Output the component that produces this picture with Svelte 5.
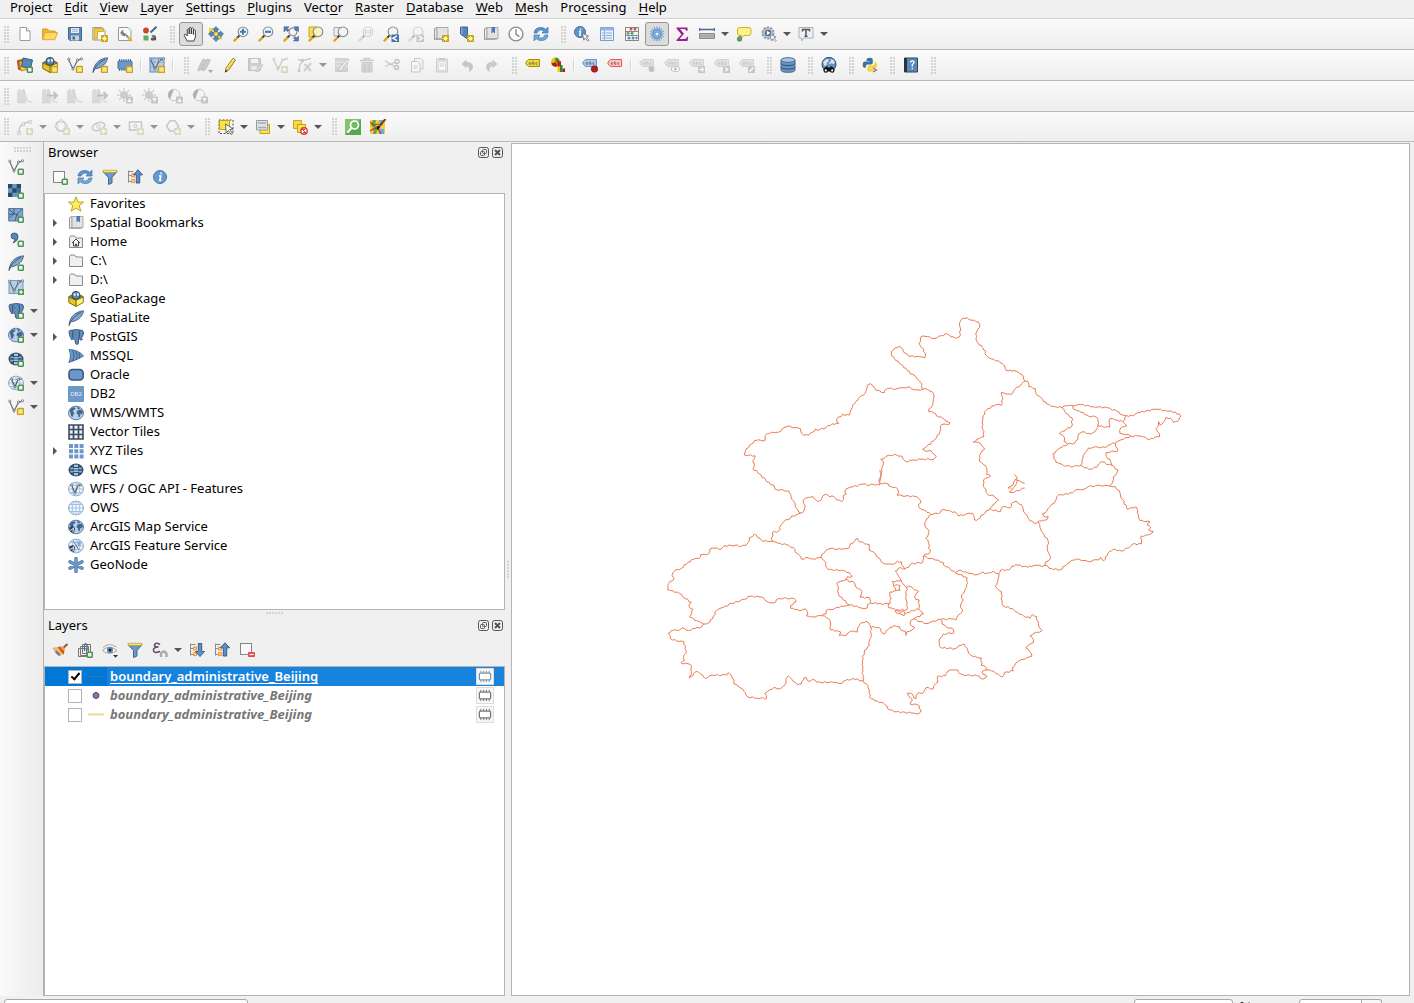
<script lang="ts">
	type Tool = { icon: string; label: string; menu?: boolean; off?: boolean; pressed?: boolean };
	type Item = Tool | 'sep';

	const t = (icon: string, label: string, flags = ''): Tool => ({
		icon,
		label,
		menu: flags.includes('m'),
		off: flags.includes('d'),
		pressed: flags.includes('p')
	});

	const menus = [
		['Pro', 'j', 'ect'], ['', 'E', 'dit'], ['', 'V', 'iew'], ['', 'L', 'ayer'], ['', 'S', 'ettings'],
		['', 'P', 'lugins'], ['Vect', 'o', 'r'], ['', 'R', 'aster'], ['', 'D', 'atabase'], ['', 'W', 'eb'],
		['', 'M', 'esh'], ['Pro', 'c', 'essing'], ['', 'H', 'elp']
	];

	// badges sit in the lower right corner of a 16x16 icon
	const yellow = '<rect x="9.5" y="9.5" width="6" height="6" rx="1" fill="#f7e58a" stroke="#c9a11a" stroke-width="1.4"/>';
	const star = '<rect x="9" y="9" width="7" height="7" rx="1" fill="#c9a10f"/><path d="M12.5 9.8v5.4M9.8 12.5h5.4M10.7 10.7l3.6 3.6M14.3 10.7l-3.6 3.6" stroke="#fff3b0" stroke-width="1"/>';
	const green = '<rect x="10.3" y="10.3" width="5" height="5" rx="1" fill="#eef7ee" stroke="#4f9457" stroke-width="1.6"/>';
	const lens = '<path d="M.8 15.2l4.4-4.4" stroke="#e0a61c" stroke-width="2.4"/><path d="M4.6 11.4l2-2" stroke="#333" stroke-width="1.8"/><circle cx="10" cy="5.8" r="4.8" fill="#f3f5f6" stroke="#8b9093" stroke-width="1.2"/>';
	const vee = '<path d="M1.5 2.5L6 12 10.5 3.5 14 2" fill="none" stroke="#5c6670" stroke-width="1.1"/><g fill="#fff" stroke="#5c6670" stroke-width=".8"><circle cx="1.8" cy="2.2" r="1.1"/><circle cx="6" cy="12" r="1.1"/><circle cx="10.5" cy="3" r="1.1"/><circle cx="14.5" cy="1.8" r="1.1"/></g>';
	const feather = '<path d="M1 15.5C1.5 9 5 2 15.5.8 15 5.5 11 10.500 3.600 11.800" fill="#7ea6d0" stroke="#4a6585"/><path d="M1 15.5C3 10 7 5 13 2.500" fill="none" stroke="#3d5775"/>';
	const globe = '<ellipse cx="8" cy="8" rx="7.500" ry="6.800" fill="#b9d1ea" stroke="#587fa8"/><path d="M1.500 5.500L4 2.500h3l.5 1.500-2 1-.5 2 1.500 1-1 1.500-1 2.500-1.500-1-.5-3zM9 2l2.500.5.5 1.500-2 .5zM9 6l2-1 3-.5 1 3-1.500 2-1-1-.5 3-1.500 1-.5-3-1.500-1z" fill="#45678d"/>';
	const grid = '<path d="M.8 8h14.400M8 1v14M2 4.500h12M2 11.500h12" fill="none" stroke="currentColor"/><ellipse cx="8" cy="8" rx="3.800" ry="6.800" fill="none" stroke="currentColor"/>';
	const wire = `<ellipse cx="8" cy="8" rx="7.400" ry="6.800" fill="#f3f8fd" stroke="#7ba1ca"/><g color="#a5c1e0">${grid}</g>`;
	const smallVee = '<path d="M3.500 4L7 12 10 4.500 12.500 4" fill="none" stroke="#4f5964" stroke-width="1.200"/><g fill="#fff" stroke="#4f5964" stroke-width=".7"><circle cx="3.500" cy="4" r="1"/><circle cx="7" cy="12" r="1"/><circle cx="10" cy="4.500" r="1"/><circle cx="12.800" cy="3.800" r="1"/></g>';
	const darkGlobe = '<ellipse cx="8" cy="8" rx="7.500" ry="6.500" fill="#34506f"/><path d="M2 7.200h3V5.500H2.700zM11 5.500v1.700h3l-.7-1.700zM2 8.800h3v1.700H2.700zM11 8.800h3l-.7 1.700H11z" fill="#8eb1d8"/><path d="M6 2.800h4V5H6zM5.500 6h5v4h-5zM6 11h4v2.200H6z" fill="#a9c6e6"/><path d="M4 8h8" stroke="#34506f"/>';
	const elephant = '<path d="M1 3Q1 .8 4 1.200Q8 0 12 1Q15.500 .8 15.500 4Q15 8 13 9.500L14.500 10.500 12 11 11.500 8.500 10.500 9V14Q10 15.600 8.500 15.500 7 15 7.200 11L5 9.500 4 11Q1.500 8 1 3z" fill="#5f8cbc" stroke="#3d5c80"/><path d="M5 2Q4 6 5 9M11 2Q12 5 11 8.500M6.500 5h1" fill="none" stroke="#34506f"/>';
	const box = '<path d="M.8 5.500L8 2.500 15.200 5.500v6L8 15.500.8 11.500z" fill="#e6c42a" stroke="#7d6500"/><path d="M8.500 9.500l6.200-3.200v5L8.500 14.700z" fill="#fdf27c"/><path d="M1 5.500L8 2.500l7 3L8 9z" fill="#5a80aa"/><circle cx="8" cy="4.400" r="4" fill="#5a80aa" stroke="#2d4664"/><path d="M5 3.500l2-1.800 1 1.800-1 2zM9 1.500l2.200 1-.7 3-1.500-1z" fill="#d5e5f5"/><path d="M.8 6L8 9.200 15.200 6M8 9.200v6" fill="none" stroke="#7d6500"/>';
	const tag = (fill: string, line: string) => `<path d="M1 5L3.500 2.500H14.500V9.500H3.500L1 7z" fill="${fill}" stroke="${line}"/><path d="M4.200 7.300v-1.600h1.600v1.600zM7.600 4.300v3h1.400v-1.600h-1.400M12.400 5.700h-1.500v1.600h1.500" fill="none" stroke="#666" stroke-width=".7"/>`;
	const chip = '<path d="M2.500 4V2M4.700 4V2M6.900 4V2M9.100 4V2M11.300 4V2M13.500 4V2M2.500 14v-2M4.700 14v-2M6.900 14v-2M9.100 14v-2" stroke="#4a7099"/><rect x="1" y="4" width="14" height="8" rx="1" fill="#6b98c8" stroke="#4a7099"/>';
	const book = '<path d="M1.500 2.500L4 1.500v11l-2.500 1z" fill="#eee" stroke="#999"/><path d="M4 1.500h11v11H4z" fill="#e3e3e3" stroke="#aaa"/><path d="M1.500 13.500h11l2.500-1" fill="none" stroke="#aaa"/>';
	const refresh = '<path d="M1 7Q1.500 1.500 8 1.500 11 1.500 12.800 3.300L15 1.200V7H9L11 5Q6 2 4 7z" fill="#5c94cf" stroke="#3e74ac" stroke-width=".7"/><path d="M15 9Q14.500 14.500 8 14.500 5 14.500 3.200 12.700L1 14.800V9H7L5 11Q10 14 12 9z" fill="#77aadb" stroke="#3e74ac" stroke-width=".7"/>';
	const funnel = '<path d="M1 2.500h14L10 8.500V14l-3.500 1.500V8.500z" fill="#6b98c8" stroke="#44688f"/><path d="M1.300 1.300h13.400v2.200H1.300z" fill="#ffec4f" stroke="#a69838" stroke-width=".7"/>';
	const tree = '<path d="M1.500 1.500v12M1.500 2.500h5M1.500 6.500h4M1.500 12.500h4" stroke="#8a8a8a" fill="none"/><g fill="#fff" stroke="#f19a3e" stroke-width="1.300"><rect x="4.700" y="5.200" width="2.600" height="2.600"/><rect x="4.700" y="10.800" width="2.600" height="2.600"/></g>';
	const info = '<circle cx="8" cy="8" r="6.500" fill="#659ad0" stroke="#4477ad"/><path d="M9 3.500v1.800M7 7h1.800L7.800 11.500h1.700" fill="none" stroke="#fff" stroke-width="1.600"/>';
	const curve = '<path d="M2 14Q2 3 13 3" fill="none" stroke="#777" stroke-width="1.300"/><path d="M.7 12.700h2.600v2.600H.7zM5 4h2.600v2.600H5zM12 1.700h2.600v2.600H12z" fill="#fff" stroke="#777"/>';
	const hist = '<path d="M.5 15V3l1.500-2 2 1 .5 13zM5 15V2l1.500-1 1.500 8 .5 6z" fill="#a3b594" stroke="#8b9487" stroke-width=".6"/><path d="M7 1.500l1.500 6L10.500 13l5 1.500" fill="none" stroke="#888"/>';
	const sun = '<circle cx="7" cy="7" r="4" fill="#8d8552"/><path d="M7 0v2.500M7 11.500V14M0 7h2.500M11.500 7H14M2 2l1.700 1.700M12 2l-1.700 1.700M2 12l1.700-1.700" stroke="#8f875b" stroke-width="1.400"/>';
	const half = '<circle cx="7" cy="7" r="5.800" fill="#f6f6f6" stroke="#777"/><path d="M7 1.200A5.800 5.800 0 0 0 3 11.200z" fill="#333"/>';
	const up = '<rect x="9" y="8.500" width="7" height="7" rx="1" fill="#767660"/><path d="M12.500 10l2.200 4h-4.400z" fill="#fff"/>';
	const down = '<rect x="9" y="8.500" width="7" height="7" rx="1" fill="#767660"/><path d="M12.500 14l2.200-4h-4.400z" fill="#fff"/>';
	const pencil = '<path d="M4 11L11 1.200l2.500 1.800L6.500 13.200 3.300 15z" fill="#f0d13a" stroke="#a0812a"/><path d="M5 11.500L12 2" stroke="#fff09a"/><path d="M2.800 15.500l.8-2.800 2 1.400z" fill="#333"/>';
	const folder = '<path d="M1.500 13.500v-10L2.500 2h4l1.500 2h6.500v9.500z" fill="#f0f0f0" stroke="#8a8a8a"/>';

	const icons: Record<string, string> = {
		page: '<path d="M3 1.500h6.500L13 5v9.500H3z" fill="#fff" stroke="#9c9c9c"/><path d="M9.500 1.500V5H13" fill="#eee" stroke="#9c9c9c"/>',
		open: '<path d="M.6 13.500V3h5l1.500 2h6v2" fill="#e9b72c" stroke="#d2a02a"/><path d="M3 6.500h12.500l-2.700 7.200H.7z" fill="#ffd965" stroke="#dfab2d"/>',
		save: '<path d="M1.500 1.500h13v13h-11.500l-1.500-1.500z" fill="#5b87b6" stroke="#42678f"/><path d="M4 2h8v5H4z" fill="#e8eef5"/><path d="M5 3.500h6M5 5.300h6" stroke="#a7b8c9"/><path d="M4 9.500h8v5H4z" fill="#d0d4d8"/><path d="M5.500 10.500h2.500v3H5.500z" fill="#42678f"/>',
		layout: '<path d="M.8 1.500h9L13 4.700V14H.8z" fill="#fff" stroke="#999"/><path d="M2 2.500h9.500v3H5.500V13H2z" fill="#f0cb3a" stroke="#c49a1d" stroke-width=".7"/>' + star,
		manager: '<path d="M1.500 1.500h9.500L14 4.500V14.500H1.500z" fill="#fafafa" stroke="#999"/><path d="M4.300 5.500l4 4M9.200 9.200l4.800 5.300" stroke="#777" stroke-width="2"/><path d="M6.500 4.500a2.500 2.500 0 1 0 2.500 3" fill="none" stroke="#777"/><path d="M10.500 10.500l4.300 4.500" stroke="#e3b92d" stroke-width="2.200"/>',
		style: '<circle cx="4" cy="4.500" r="2.900" fill="#c6492b"/><path d="M8.500 6.500L14.500.8" stroke="#44688f" stroke-width="2"/><rect x="1.500" y="9.500" width="5" height="5" fill="#66a85b"/><path d="M9.800 10.200q3.500-1.200 3.500 1v3M13 11.800q-3.500-.2-3.500 1.300 1 1.700 3.500 0" fill="none" stroke="#444" stroke-width="1.300"/>',
		hand: '<path d="M4.200 15L1.300 9.500Q1 8 2.500 8.200L4.300 10V3.500q.9-1.500 1.900 0V8 2q1-1.600 2.100 0v6-5.500q1-1.500 2.100 0V8.500 4.500q1.100-1.200 2 0V11l-1.500 4z" fill="#fff" stroke="#333" stroke-width=".9"/>',
		pan: '<path d="M1.500 2.500h5v4h-5zM6 6h4v4H6zM10 9.500h3.500V13H10z" fill="#f5de50" stroke="#cfb52c" stroke-width=".6"/><path d="M8 .5l3.200 3.200H9.500V6h-3V3.700H4.800zM8 15.500l-3.200-3.200h1.700V10h3v2.300h1.700zM.5 8l3.200-3.200v1.700H6v3H3.700v1.700zM15.500 8l-3.200 3.200V9.500H10v-3h2.300V4.800z" fill="#5b87b6" stroke="#42678f" stroke-width=".6"/><path d="M6.500 6.500h3v3h-3z" fill="#f5de50"/>',
		zin: lens + '<path d="M10 2.800v6M7 5.800h6" stroke="#4679b3" stroke-width="2"/>',
		zout: lens + '<path d="M7 5.800h6" stroke="#4679b3" stroke-width="2.200"/>',
		zfull: lens.replace('r="4.8"', 'r="4"') + '<path d="M1 .8h5L4.500 2.300 6 4 4.500 5.500 2.800 4 1 5.800zM15.500.8h-4.500l1.500 1.500-1 1.200L13 5l1-1 1.500 1.500zM15.500 15h-5l1.500-1.500-1.500-1.500L12 10.500l1.500 1.500 2-2z" fill="#5280b3" stroke="#42678f" stroke-width=".6"/>',
		zsel: '<path d="M1 1h8v10H1z" fill="#f5de50" stroke="#bda528"/>' + lens.replace('#f3f5f6', '#fbf5bd'),
		zlay: '<path d="M1 1.500h8V10H1z" fill="#eee" stroke="#aaa"/>' + lens,
		znat: lens + '<path d="M7.700 3.800v4M12.300 3.800v4M10 4.200v1M10 6.500v1" stroke="#555"/>',
		zlast: lens + '<rect x="8.500" y="8.500" width="7.500" height="7.500" fill="#3f74ae"/><path d="M14 9.800l-4 2.400 4 2.400" fill="none" stroke="#fff" stroke-width="1.500"/>',
		znext: lens + '<rect x="8.500" y="8.500" width="7.500" height="7.500" fill="#777"/><path d="M10.500 9.800l4 2.400-4 2.400" fill="none" stroke="#fff" stroke-width="1.500"/>',
		bmap: book + star,
		bnew: '<path d="M2.500 1h7v12L6 10.500 2.500 8z" fill="#5484ba" stroke="#3c628d"/><path d="M3 1.500h1.500v6.500H3z" fill="#86abd3"/>' + star,
		bshow: book + '<path d="M8.500 1h3.500v6.500L10.200 6 8.500 7.500z" fill="#4c7cb2"/>',
		clock: '<circle cx="8" cy="8" r="6.900" fill="#fcfcfc" stroke="#8a8a8a" stroke-width="1.400"/><path d="M8 3v5.200l3.300 2.600" fill="none" stroke="#777" stroke-width="1.200"/>',
		refresh,
		identify: '<circle cx="6" cy="6" r="5.500" fill="#5f92c8" stroke="#44729f"/><path d="M6.600 2.500v1.500M5 5.500h1.500L5.700 9H7" fill="none" stroke="#fff" stroke-width="1.300"/><path d="M8.500 7.500l6 2.700-2.500 1 3 3-1 1-3-3-1.200 2z" fill="#fff" stroke="#666" stroke-width=".8"/>',
		table: '<path d="M1.500 1.500h13v13h-13z" fill="#e8f1fb" stroke="#6f9dce"/><path d="M1.500 1.500h13v3h-13z" fill="#8db6e2"/><path d="M5.500 4.500v10M3 7h2M6.500 7H13M3 9.500h2M6.500 9.500H13M3 12h2M6.500 12H13" stroke="#8eb0d4"/>',
		abacus: '<path d="M1.500 1v14M14.500 1v14M1 14.500h14M1 1.500h14M1 5.500h14M1 9.500h14" stroke="#888"/><g fill="#d15050"><circle cx="7" cy="3" r="1.500"/><circle cx="11" cy="3" r="1.500"/></g><g fill="#63a268"><circle cx="4" cy="7.300" r="1.500"/><circle cx="8" cy="7.300" r="1.500"/></g><g fill="#6289b3"><circle cx="5" cy="12" r="1.500"/><circle cx="9" cy="12" r="1.500"/><circle cx="12.500" cy="12" r="1.200"/></g>',
		gear: '<path d="M8 .8v14.400M.8 8h14.400M2.900 2.900l10.200 10.200M13.100 2.900L2.900 13.100M5.200 1.300l5.600 13.400M1.300 10.800l13.400-5.600M10.800 1.300L5.200 14.700M1.300 5.200l13.400 5.600" stroke="#6b9bd2" stroke-width="1.200"/><circle cx="8" cy="8" r="5" fill="#6b9bd2"/><circle cx="8" cy="8" r="3" fill="none" stroke="#8fb4e0"/><circle cx="8" cy="8" r="1.500" fill="#e6edf5"/>',
		sigma: '<path d="M2.500 1.500h11V5h-1Q12 3 9.500 3H6l4 4.700L5.500 13H10q2.800 0 3.300-2.300h1L13.500 15H2.500v-1l5-5.500-5-6z" fill="#9c1b8f"/>',
		measure: '<path d="M.7 3.500h14.600M.7 2v3M15.300 2v3" stroke="#4a6b92" stroke-width="1.300"/><path d="M.5 7.500h15v5H.5z" fill="#b4b4b4" stroke="#8a8a8a"/><path d="M1 10h14" stroke="#9d9d9d"/>',
		tip: '<path d="M3.500 1.500H13Q15 1.500 15 4v3q0 2.500-2 2.500H8L5 12.500l.5-3h-2Q1.500 9.500 1.500 7V4q0-2.500 2-2.500z" fill="#fff08a" stroke="#c9b23a"/><path d="M4 9.500v4" stroke="#777"/><circle cx="3.500" cy="13" r="2.300" fill="#6a9b60" stroke="#4c7043" stroke-width=".6"/>',
		action: '<circle cx="7" cy="7" r="5.500" fill="#fff" stroke="#999" stroke-width="2" stroke-dasharray="2.500 .9"/><circle cx="7" cy="7" r="4.500" fill="#fff" stroke="#999" stroke-width=".8"/><circle cx="7" cy="7" r="3.500" fill="#44729f"/><path d="M5.800 4.800v4.400L9.500 7z" fill="#fff"/><path d="M9 8.500l6 2.500-2.300 1 2.500 2.500-1 1-2.500-2.500-1 2z" fill="#fff" stroke="#777" stroke-width=".8"/>',
		text: '<path d="M1 1.500h14v10.500H6L3.500 15v-3H1z" fill="#eef2f5" stroke="#a7b3bf"/><path d="M4.500 5.500V3.500h7v2M8 3.500v6.800M6.500 10.200h3" fill="none" stroke="#555" stroke-width="1.500"/>',
		dsm: '<path d="M.5 3.500l6-1 2 9-7 1z" fill="#c9652a" stroke="#9b4e15"/><path d="M2.500 5l7-1.500 1.500 8.500-7 2z" fill="#f4cd40" stroke="#af8b17"/><path d="M6 1l9.500 2-2 8.500-9-2z" fill="#5b87b6" stroke="#355c86"/>' + green,
		gpkg: box + yellow,
		shp: vee + yellow,
		splite: feather + yellow,
		mem: chip + yellow,
		virt: '<rect x="1" y="1" width="14" height="14" fill="#b6cfe8" stroke="#5f89b6"/><path d="M1 5h14M1 10h14M5 1v14" stroke="#89aed5"/>' + vee + yellow,
		edits: '<path d="M1 12L6 2l3 1-4.500 9.500L1.500 14zM5 12L10 2l3.500 1-5 9.500L5.500 14z" fill="#8d7b78" stroke="#76615e"/><path d="M11 13h5l-2.500 3z" fill="#111"/>',
		pencil,
		savee: '<path d="M1.500 1.500h12v12h-12z" fill="#888" stroke="#666"/><path d="M4 2h7v4H4z" fill="#eee"/><path d="M4 9h6v4H4z" fill="#ddd"/><path d="M8 14l6-7 2 1-5 7z" fill="#aaa" stroke="#777"/>',
		addf: vee + star,
		vertex: '<path d="M2 14Q2 7 6 4M1 3h5M6 3.500l8-2" fill="none" stroke="#777" stroke-width="1.300"/><path d="M4 2h3v3H4zM.8 12.500h2.400v2.400H.8z" fill="#777"/><path d="M7 14l7-8M7.500 7l6.500 7" stroke="#9a8a60" stroke-width="2.200"/>',
		multi: '<path d="M1.500 1.500h12v13h-12z" fill="#98a07f" stroke="#888"/><path d="M1 5h13M1 9h13" stroke="#ddd"/><path d="M4 13l9-11 2 1-8 11z" fill="#e7dfc0" stroke="#776a55"/>',
		trash: '<path d="M1 3.500h14M5.500 3V1.500h5V3" fill="none" stroke="#a76a6a" stroke-width="1.500"/><path d="M3 5.500h10V15H3z" fill="#cf9696" stroke="#a76a6a"/><path d="M6 7v6.500M10 7v6.500" stroke="#8f5454"/>',
		cut: '<path d="M1 4l10 5.500M1 9.500L12 5" stroke="#777" stroke-width="1.300"/><circle cx="12.500" cy="10.500" r="2" fill="none" stroke="#a55" stroke-width="1.400"/><circle cx="13" cy="4.500" r="2" fill="none" stroke="#a55" stroke-width="1.400"/>',
		copy: '<path d="M5.500 1.500h6L14 4v8H5.500z" fill="#eee" stroke="#777"/><path d="M2.500 4.500h6L11 7v8H2.500z" fill="#fff" stroke="#777"/><path d="M4.500 9h4M4.500 11h4" stroke="#888"/>',
		paste: '<path d="M2.500 2h11v13h-11z" fill="#ccc" stroke="#888"/><path d="M4.500 4.500h7v9h-7z" fill="#fff" stroke="#888" stroke-width=".6"/><path d="M5 1h6v2.500H5z" fill="#777"/><path d="M6 7h4M6 9h4" stroke="#888"/>',
		undo: '<path d="M2.500 7l5-4.500V5Q14 5 14 10q0 3-4 5 1.500-5-2.500-6v2.500z" fill="#8b6e68"/>',
		redo: '<path d="M13.500 7l-5-4.500V5Q2 5 2 10q0 3 4 5-1.500-5 2.500-6v2.500z" fill="#75836c"/>',
		lab: tag('#f2da34', '#a08d0b'),
		diag: '<circle cx="5.500" cy="5" r="4.500" fill="#e5c400"/><path d="M5.500 5V.5A4.500 4.500 0 0 1 9.500 6z" fill="#2d8c2d"/><path d="M5.500 5L1.200 6.500A4.500 4.500 0 0 0 8 9z" fill="#bb1d1d"/><path d="M7 5l4-1v5L8 10z" fill="#c11f1f"/><path d="M7.500 10h3v5h-3z" fill="#f0cd00"/><path d="M10 8h2.500v7H10z" fill="#218b2d"/><path d="M12.500 11.500H15V15h-2.500z" fill="#b01818"/>',
		pin: tag('#a9c9ee', '#6a97cb') + '<path d="M12 9v5" stroke="#777"/><circle cx="12.500" cy="12" r="3.300" fill="#b31b20" stroke="#821014" stroke-width=".6"/>',
		unp: tag('#ffc4c2', '#f0524f'),
		lpin: tag('#c5c09a', '#99957a') + '<circle cx="12.500" cy="12" r="3" fill="#8b5d5d"/>',
		leye: tag('#c5c09a', '#99957a') + '<ellipse cx="11.500" cy="12" rx="4.200" ry="2.600" fill="#fff" stroke="#666"/><circle cx="11.500" cy="12" r="1.400" fill="#555"/>',
		lmove: tag('#c5c09a', '#99957a') + '<rect x="9" y="9" width="7" height="7" fill="#777"/><path d="M10 12.500h4M12.500 10.500l2 2-2 2" fill="none" stroke="#fff" stroke-width="1.200"/>',
		lrot: tag('#c5c09a', '#99957a') + '<rect x="9" y="9" width="7" height="7" fill="#777"/><path d="M11 14q3 0 3-3M11 10.500l3 3" fill="none" stroke="#fff" stroke-width="1.200"/>',
		lchg: tag('#c5c09a', '#99957a') + '<rect x="9" y="9" width="7" height="7" fill="#777"/><path d="M10.500 14.500l4-4" stroke="#fff" stroke-width="1.700"/>',
		db: '<path d="M1 3v10q0 2.300 7 2.300t7-2.300V3z" fill="#6794c4" stroke="#4b6a8e"/><ellipse cx="8" cy="3" rx="7" ry="2.300" fill="#a8c5e5" stroke="#4b6a8e"/><path d="M1 6.500q0 2 7 2t7-2M1 10q0 2 7 2t7-2" fill="none" stroke="#34506f"/>',
		search: '<circle cx="8" cy="7.300" r="7" fill="#6a8fb7" stroke="#34506f"/><path d="M2 5.500l2.500-3 2.500-.5 1 2-2 1.500-.5 2.500-2 1zM9.500 2l3 1 1.500 3-2 1-1.500-1-2 1.500-.5-2 2-1z" fill="#d5e5f5"/><path d="M2.500 14q0-3.500 3-4.500h1.300v1h2.400v-1h1.300q3 1 3 4.500z" fill="#111"/><circle cx="4.800" cy="13.400" r="1.700" fill="#fff" stroke="#111" stroke-width="1.200"/><circle cx="11.200" cy="13.400" r="1.700" fill="#fff" stroke="#111" stroke-width="1.200"/>',
		python: '<path d="M7.500.8q3.300-.4 3.300 2v3q0 1.800-1.800 1.800H5.500Q3.800 7.600 3.800 9.500v1.200H2.500Q.6 10.500.7 7.500.8 4.600 3 4.600h4.700V4H4.500V2.500Q4.700 1 7.500.8z" fill="#3a72a5"/><path d="M8.500 14.800q-3.200.2-3-2V10q0-1.800 1.700-1.800h3.500q1.800 0 1.800-1.800V4.800h.7q1.900.2 2 3 0 3-2 3.200H8.700v.8h3.300q0 2.800-3.500 3z" fill="#ffd140"/><path d="M11 11l3.500 2-3.500 2" fill="none" stroke="#777" stroke-width="1.200"/>',
		help: '<path d="M1.500 1h13v14h-13z" fill="#5a87bb" stroke="#33475c"/><path d="M1 1h3v14H1z" fill="#263442"/><path d="M7.500 5.500q0-1.700 1.800-1.700t1.700 1.500Q11 6.500 9.300 7.500v2M9.300 10.800v1.400" fill="none" stroke="#fff" stroke-width="1.300"/>',
		hist,
		histx: hist + '<path d="M5 7.500h9M11.500 4l3.500 3.500-3.500 3.500" fill="none" stroke="#666" stroke-width="2"/>',
		sunup: sun + up, sundn: sun + down, conup: half + up, condn: half + down,
		curve: curve + star,
		circ: '<circle cx="7" cy="7" r="5" fill="none" stroke="#777" stroke-width="1.700"/><path d="M5.700.8h2.600v2.600H5.700zM1 6h2.500v2.500H1zM11 6h2.500v2.500H11z" fill="#fff" stroke="#777" stroke-width=".8"/>' + star,
		ell: '<ellipse cx="7.500" cy="7.500" rx="6.500" ry="3.800" fill="none" stroke="#777" stroke-width="1.500" transform="rotate(-20 7.500 7.500)"/><circle cx="7.500" cy="7.500" r="1.800" fill="none" stroke="#777"/>' + star,
		rect: '<rect x="1.500" y="3" width="12" height="8" fill="none" stroke="#777" stroke-width="1.600"/><circle cx="7.500" cy="7" r="1.700" fill="none" stroke="#777"/>' + star,
		poly: '<path d="M5 1.700h5l3.500 5.500-3 4.800H5L1.500 7.200z" fill="none" stroke="#777" stroke-width="1.600"/>' + star,
		sel: '<rect x="1" y="1" width="14" height="13.500" fill="none" stroke="#555" stroke-dasharray="2 1.500"/><path d="M1.500 1.500h10v9h-10z" fill="#f8e34a" stroke="#bca50e"/><path d="M7.500 5l7.500 5-3.200.5 2.700 4-1.500 1-2.600-4-2.200 2.500z" fill="#fff" stroke="#444" stroke-width=".8"/>',
		form: '<path d="M5 5.500h9.500v9H5z" fill="#f8e34a" stroke="#bca50e"/><path d="M1.500 1.500h11v9.500h-11z" fill="#dfe2e5" stroke="#999"/><path d="M3 4h8M3 8.500h8" stroke="#aaa" stroke-width="1.500"/>',
		desel: '<path d="M1.500 1.500h8v8h-8z" fill="#f8d84a" stroke="#d3a01b"/><path d="M5.500 5.500h8v8h-8z" fill="#f8e34a" stroke="#bca50e"/><circle cx="12" cy="12" r="3.200" fill="#fff" stroke="#dd3a35" stroke-width="1.400"/><path d="M9.800 9.800l4.400 4.400M11 10.500h2M11 13.500h2" stroke="#dd3a35" stroke-width="1"/>',
		osm: '<path d="M0 0h16v16H0z" fill="#57a84e"/><path d="M0 0h16L0 16z" fill="#83c36b"/><circle cx="9.500" cy="6" r="4" fill="#74b864" stroke="#fff" stroke-width="1.700"/><path d="M2.500 13.500l4-4.500" stroke="#fff" stroke-width="2"/>',
		quick: '<path d="M0 1h15v14H0z" fill="#f4d037"/><path d="M3 1h3l-1 5 3 2-2 7H3L4 9 1 6z" fill="#54aa4c"/><path d="M9 1h4v5l-3 1zM9 10h5v5H9z" fill="#67aee0"/><path d="M0 12l5-3 3 1 3 5M0 3l3 3 6-1" fill="none" stroke="#c5371f" stroke-width="1.200"/><path d="M9.500 7L15.500 0" stroke="#8b3b12" stroke-width="2"/><path d="M6.500 8q2-2 3.500-.5Q10.500 9 7.500 11z" fill="#27190f"/>',
		avec: vee + green,
		aras: '<path d="M0 1h13v13H0z" fill="#6b98c8"/><path d="M0 1h4.300v4.300H0zM8.700 1H13v4.300H8.700zM4.300 5.300h4.400v4.400H4.300zM0 9.700h4.300V14H0z" fill="#2d4765"/><path d="M8.700 5.300H13v4.400H8.700z" fill="#46699a"/>' + green,
		amesh: '<path d="M.7 1.500h14v12.500H.7z" fill="#7ea6d1" stroke="#56799f"/><path d="M1 2l5 5-5 4M6 7l-5 .5M6 7h3l5.500-5M6 2v5M9 7l-2 7M9 7l2 3" fill="none" stroke="#34506f" stroke-width=".8"/>' + green,
		adel: '<path d="M3 5q0-3 3.500-3t3.500 4q0 4-5 6 2-2.500 2-4Q3 8.500 3 5z" fill="#5b87b6" stroke="#3d5c80"/>' + green,
		asp: feather + green,
		avirt: '<rect x="1" y="1.500" width="14" height="13" fill="#b6cfe8" stroke="#7999ba"/>' + vee + '<rect x="10" y="10" width="6" height="6" fill="#4f9457"/><path d="M13 11v4M11 13h4" stroke="#fff" stroke-width="1.200"/>',
		apg: elephant + green, awms: globe + green, awcs: darkGlobe + green, awfs: wire + smallVee + green,
		anew: vee + yellow,
		addl: '<rect x="1.500" y="2.500" width="11" height="11" fill="#fafafa" stroke="#858585"/>' + green,
		funnel, info,
		colup: tree + '<path d="M11 .8l4.500 5h-2.800V14H9.300V5.800H6.500z" fill="#6290c2" stroke="#345e8d"/>',
		expdn: tree + '<path d="M11 14.500l4.500-5h-2.800V1.500H9.300v8H6.500z" fill="#6290c2" stroke="#345e8d"/>',
		fav: '<path d="M8 .8l2 5.200 5.500.2-4.300 3.400 1.600 5.600L8 12l-4.800 3.200 1.600-5.600L.5 6.200 6 6z" fill="#ffef5c" stroke="#bda425"/>',
		sbook: book + '<path d="M8.500 1h3.500v6.500L10.200 6 8.500 7.500z" fill="#4c7cb2"/>',
		home: folder + '<path d="M4 9l4-4 4 4M5.500 8v4h5V8M7.500 12v-2h1.200v2" fill="#fff" stroke="#444"/>',
		folder, box, feather, elephant,
		mssql: '<path d="M1 1.500Q11 2 15.500 8 10 11.500.8 14.500 4 8 1 1.500z" fill="#6b98c8" stroke="#4a7099"/><path d="M4.500 2.200q3 5.500-.5 11.400M8 3.500q2.500 4.500 0 8.500M11 5.200q1.500 2.800 0 5.400" fill="none" stroke="#3f6389"/>',
		oracle: '<rect x="1" y="2.500" width="14.200" height="10.500" rx="3.500" fill="#6b98c8" stroke="#34557c" stroke-width="1.500"/>',
		globe,
		vtile: '<path d="M1 1h14v14H1z" fill="#e8eef5" stroke="#3c4c5f" stroke-width="1.600"/><path d="M5.500 1v14M10.500 1v14M1 5.500h14M1 10.500h14" stroke="#3c4c5f" stroke-width="1.700"/>',
		xyz: '<path d="M1 1h4v4H1zM6.300 1h4v4h-4zM11.600 1h4v4h-4zM1 6.300h4v4H1zM6.300 6.300h4v4h-4zM11.600 6.300h4v4h-4zM1 11.600h4v4H1zM6.300 11.600h4v4h-4zM11.600 11.600h4v4h-4z" fill="#6b98c8"/>',
		wcs: darkGlobe, wfs: wire + smallVee, ows: wire,
		amap: globe + '<path d="M1 8.500l4.500-1.500 1.500 2.500-1 4.500-4-1.500z" fill="#29415c"/><path d="M2 11.500l3.500-2M5.500 8.500l-.5 4.500" stroke="#fff" stroke-width=".9"/>',
		afeat: wire + '<path d="M9 3l4.500 1-1 3.500-2.500.5z" fill="#87a9cf"/><path d="M1 8.500l4.500-1.500 1.500 2.500-1 4.500-4-1.500z" fill="#29415c"/><path d="M2 11.500l3.500-2M5.500 8.500l-.5 4.500" stroke="#fff" stroke-width=".9"/><path d="M5 3l3 4 3 5" fill="none" stroke="#5c7693"/>',
		geonode: '<path d="M8 1.500v13M2 4.800l12 6.400M14 4.800L2 11.200" stroke="#54799f" stroke-width="3.400" stroke-linecap="round"/><path d="M8 1.500v13M2 4.800l12 6.400M14 4.800L2 11.200" stroke="#6b98c8" stroke-width="2.200" stroke-linecap="round"/>',
		brush: '<path d="M10 7l5.500-5" stroke="#9c5922" stroke-width="2"/><path d="M.5 6l5 -1 5 6-1.500 3q-5 0-8.500-8z" fill="#f1c73d"/><path d="M.5 6l2.500-.8 4.500 6.300L6.500 14z" fill="#f0a8a0"/><path d="M3 10l1.500-1.500 4 4L7 14z" fill="#6b6fba"/><path d="M5.500 5L9 4.500 12.500 8l-1 5z" fill="#c9512f"/><path d="M8 5l3.500-.5 1.500 2.500-2 2z" fill="#e0a04d"/>',
		group: '<path d="M5.500 2.500h8v9h-8zM3.500 4.500h8v9h-8zM1.500 6.500h8v8h-8z" fill="#eee" stroke="#777"/><path d="M7.500 9V3q1.300-3 2.600 0v6" fill="none" stroke="#44688f" stroke-width="1.200"/>' + green,
		eye: '<path d="M.5 8.500Q7 2 15 8.500 7 14 .5 8.500z" fill="#fff" stroke="#9a9a9a"/><path d="M1 5.500Q7 0 14.500 5" fill="none" stroke="#aaa"/><circle cx="8" cy="8" r="3.100" fill="#5b87b6"/><circle cx="8" cy="8" r="1.300" fill="#222"/><path d="M11 13h5l-2.500 2.800z" fill="#333"/>',
		expr: '<path d="M8 2.500Q3-.5 2.500 3.300q.3 2 4 1.700Q1 5 1.500 8.500q1 3.500 6.500.8" fill="none" stroke="#6d4776" stroke-width="1.600"/><path d="M9 15v-3.500q2.500-4 5.500 0V15" fill="none" stroke="#aaa" stroke-width="2.400"/>',
		remove: '<rect x="1.500" y="1.500" width="11" height="11" fill="#fafafa" stroke="#858585"/><rect x="9" y="10" width="7" height="5" rx="1" fill="#e5484d"/><path d="M10.500 12.500h4" stroke="#fff" stroke-width="1.300"/>',
		chip: '<path d="M3.500 4.500V2M6.500 4.500V2M9.500 4.500V2M12.500 4.500V2M3.500 14v-2.500M6.500 14v-2.500M9.500 14v-2.500M12.500 14v-2.500" stroke="currentColor"/><rect x="2" y="4.500" width="12" height="7" rx="1" fill="#fff" stroke="currentColor" stroke-width="1.300"/>'
	};

	const toolRows: Item[][][] = [
		[
			[t('page', 'New Project'), t('open', 'Open Project'), t('save', 'Save Project'), t('layout', 'New Print Layout'), t('manager', 'Layout Manager'), t('style', 'Style Manager')],
			[t('hand', 'Pan Map', 'p'), t('pan', 'Pan to Selection'), t('zin', 'Zoom In'), t('zout', 'Zoom Out'), t('zfull', 'Zoom Full'), t('zsel', 'Zoom to Selection'), t('zlay', 'Zoom to Layer'), t('znat', 'Native Resolution', 'd'), t('zlast', 'Zoom Last'), t('znext', 'Zoom Next', 'd'), t('bmap', 'New Map View'), t('bnew', 'New Bookmark'), t('bshow', 'Show Bookmarks'), t('clock', 'Temporal Controller'), t('refresh', 'Refresh')],
			[t('identify', 'Identify Features'), t('table', 'Attribute Table'), t('abacus', 'Field Calculator'), t('gear', 'Toolbox', 'p'), t('sigma', 'Statistical Summary'), t('measure', 'Measure', 'm'), t('tip', 'Map Tips'), t('action', 'Run Action', 'm'), t('text', 'Text Annotation', 'm')]
		],
		[
			[t('dsm', 'Data Source Manager'), t('gpkg', 'New GeoPackage Layer'), t('shp', 'New Shapefile Layer'), t('splite', 'New SpatiaLite Layer'), t('mem', 'New Scratch Layer'), 'sep', t('virt', 'New Virtual Layer'), 'sep'],
			[t('edits', 'Current Edits', 'd'), t('pencil', 'Toggle Editing'), t('savee', 'Save Edits', 'd'), t('addf', 'Add Feature', 'd'), t('vertex', 'Vertex Tool', 'md'), t('multi', 'Modify Attributes', 'd'), t('trash', 'Delete Selected', 'd'), t('cut', 'Cut Features', 'd'), t('copy', 'Copy Features', 'd'), t('paste', 'Paste Features', 'd'), t('undo', 'Undo', 'd'), t('redo', 'Redo', 'd')],
			[t('lab', 'Layer Labeling'), t('diag', 'Layer Diagrams'), 'sep', t('pin', 'Highlight Pinned Labels'), t('unp', 'Show Unplaced Labels'), 'sep', t('lpin', 'Pin Labels', 'd'), t('leye', 'Show Labels', 'd'), t('lmove', 'Move Label', 'd'), t('lrot', 'Rotate Label', 'd'), t('lchg', 'Change Label', 'd')],
			[t('db', 'DB Manager')],
			[t('search', 'MetaSearch')],
			[t('python', 'Python Console')],
			[t('help', 'Help Contents')],
			[]
		],
		[
			[t('hist', 'Local Histogram Stretch', 'd'), t('histx', 'Full Histogram Stretch', 'd'), t('hist', 'Local Cumulative Cut', 'd'), t('histx', 'Full Cumulative Cut', 'd'), t('sunup', 'Increase Brightness', 'd'), t('sundn', 'Decrease Brightness', 'd'), t('conup', 'Increase Contrast', 'd'), t('condn', 'Decrease Contrast', 'd')]
		],
		[
			[t('curve', 'Circular String', 'md'), t('circ', 'Add Circle', 'md'), t('ell', 'Add Ellipse', 'md'), t('rect', 'Add Rectangle', 'md'), t('poly', 'Add Polygon', 'md')],
			[t('sel', 'Select Features', 'm'), t('form', 'Select by Value', 'm'), t('desel', 'Deselect', 'm')],
			[t('osm', 'Place Search'), t('quick', 'QuickOSM')]
		]
	];

	const sideTools = [
		t('avec', 'Add Vector Layer'), t('aras', 'Add Raster Layer'), t('amesh', 'Add Mesh Layer'), t('adel', 'Add Delimited Text Layer'),
		t('asp', 'Add SpatiaLite Layer'), t('avirt', 'Add Virtual Layer'), t('apg', 'Add PostGIS Layers', 'm'), t('awms', 'Add WMS Layer', 'm'),
		t('awcs', 'Add WCS Layer'), t('awfs', 'Add WFS Layer', 'm'), t('anew', 'New Vector Layer', 'm')
	];

	const browserTools = [t('addl', 'Add Selected Layers'), t('refresh', 'Refresh'), t('funnel', 'Filter Browser'), t('colup', 'Collapse All'), t('info', 'Properties')];
	const layerTools = [
		t('brush', 'Layer Styling'), t('group', 'Add Group'), t('eye', 'Map Themes'), t('funnel', 'Filter Legend'), t('expr', 'Filter by Expression', 'm'),
		t('expdn', 'Expand All'), t('colup', 'Collapse All'), t('remove', 'Remove Layer')
	];

	const sources = [
		{ name: 'Favorites', icon: 'fav' },
		{ name: 'Spatial Bookmarks', icon: 'sbook', open: true },
		{ name: 'Home', icon: 'home', open: true },
		{ name: 'C:\\', icon: 'folder', open: true },
		{ name: 'D:\\', icon: 'folder', open: true },
		{ name: 'GeoPackage', icon: 'box' },
		{ name: 'SpatiaLite', icon: 'feather' },
		{ name: 'PostGIS', icon: 'elephant', open: true },
		{ name: 'MSSQL', icon: 'mssql' },
		{ name: 'Oracle', icon: 'oracle' },
		{ name: 'DB2', icon: 'db2' },
		{ name: 'WMS/WMTS', icon: 'globe' },
		{ name: 'Vector Tiles', icon: 'vtile' },
		{ name: 'XYZ Tiles', icon: 'xyz', open: true },
		{ name: 'WCS', icon: 'wcs' },
		{ name: 'WFS / OGC API - Features', icon: 'wfs' },
		{ name: 'OWS', icon: 'ows' },
		{ name: 'ArcGIS Map Service', icon: 'amap' },
		{ name: 'ArcGIS Feature Service', icon: 'afeat' },
		{ name: 'GeoNode', icon: 'geonode' }
	];

	let layers = $state([
		{ name: 'boundary_administrative_Beijing', on: true, kind: 'line', color: '#46709c' },
		{ name: 'boundary_administrative_Beijing', on: false, kind: 'point', color: '#8d6fae' },
		{ name: 'boundary_administrative_Beijing', on: false, kind: 'line', color: '#f0d68c' }
	]);
	let selected = $state(0);

	// boundary segments, three units to a map pixel, each block with its own origin
	const blocks = [
		{
			x: 730,
			y: 310,
			lines: [
				'578,238 562,239 545,237 537,230 520,233 498,237 472,235 464,242 463,248 448,242 437,240 430,228 421,221 412,226 408,242 400,255 390,260 378,274 369,284 363,300 359,315 338,313 320,328 326,341 306,341 288,353 262,361 256,357 247,367 236,376 222,376 213,366 211,356 194,353 172,349 165,352 152,364 130,368 112,370 106,377 105,391 79,391 59,405 46,424 43,435 74,437 75,442 68,452 73,462 69,475 88,492 121,523 132,526 135,537 150,540 176,543 183,560 192,575 196,590 204,600 212,609',
				'578,238 576,222 562,208 556,198 540,191 528,175 508,160 484,137 484,124 495,114 508,109 517,116 523,129 540,139 568,140 585,143 587,131 574,112 568,100 573,80 585,79 612,85 634,77 652,72 676,86 688,81 692,60 689,38 699,24 711,23 726,31 745,36 749,52 740,66 738,85 744,99 758,113 768,124 765,130 778,144 792,148 810,157',
				'578,238 592,238 606,245 612,260 609,277 606,290 597,297 596,305 610,308 620,318 638,325 648,334 660,338 657,343 635,344 632,358 628,372 610,393 590,409 578,418 588,424 603,422 612,432 619,440 611,448 580,447 552,450 528,455 520,448 515,438 500,435 475,436 462,446 452,448 461,460 455,475 453,495 449,515 450,520'
			]
		},
		{
			x: 960,
			y: 310,
			lines: [
				'120,157 134,168 138,181 150,180 174,186 190,200 196,213 184,222 176,231 164,238 158,250 146,252 124,247 128,262 124,286 108,284 84,296 73,306 68,330 66,350 72,365 72,380 58,386 40,396 56,398 66,408 74,418 62,430 58,450 72,465 80,475 80,494 92,498 76,505 70,510 70,530 78,540 84,554 102,558 116,570 104,582 90,595',
				'196,213 204,215 206,230 226,236 228,250 244,264 260,282 280,289 306,293 320,287 338,287 358,283 400,290 440,293 470,303 488,315 500,317 520,318 534,308 588,297 620,303 646,306 662,318 652,334 640,337 632,325 618,322 614,333 600,345 596,335 594,350 588,356 598,370 598,381 585,381 568,390 555,381 540,378 512,378',
				'500,317 488,335 500,348 482,354 480,370 496,374 512,378 490,388 470,396 452,404 446,404 436,412 414,411 385,414 374,430 366,452 362,466',
				'338,287 340,297 358,303 385,318 408,320 414,326 414,344 418,349 448,352 448,340 450,326 470,330 488,335',
				'414,344 408,360 394,372 366,366 356,372 354,388 344,400 322,403',
				'306,293 318,310 336,323 336,348 308,364 298,371 312,380 312,394 322,403 300,414 278,432 288,457 310,466 340,470 362,466 386,478 410,472 416,462 428,455 440,464 456,466 452,455 440,440 438,428 462,424 474,422 466,400',
				'456,466 474,480 470,490 460,500 458,516 448,528'
			]
		},
		{
			x: 660,
			y: 470,
			lines: [
				'660,0 662,20 656,30 660,40 658,45 640,43 628,46 610,42 580,50 558,57 554,66 559,72 550,76 551,88 545,95 530,90 522,80 510,80 500,73 487,80 482,92 472,94 458,79 445,82 430,90 430,98 436,108 432,122 422,129',
				'422,129 410,134 395,138 384,149 372,154 362,166 360,178 350,187 337,187 339,198 334,203 339,214',
				'339,214 322,214 304,211 290,196 283,192 278,200 268,203 265,217 258,226 245,228 225,226 195,227 184,237 165,235 150,237 146,251 133,253 122,254 117,265 100,268 84,277 64,295 45,301 36,316 42,326 26,341 23,359 40,363 65,373 76,386 94,397 87,410 99,418 95,430 88,440 110,452 130,462',
				'130,462 140,462 150,456 160,438 170,421 190,412 215,400 240,393 254,388 270,379 304,381 325,397 340,399 355,386 380,385 402,385 408,396 392,406 392,415 404,419 424,422 436,417 442,424 440,438 458,440 485,437',
				'130,462 125,471 105,476 85,481 68,474 55,482 40,481 24,490 32,506 50,513 72,516 75,535 79,548 70,562 73,572 63,579 84,581 95,590 94,605 88,625 98,618 104,607 112,604 122,612 136,626 150,617 166,616 200,615 205,608 215,616 222,630 221,641 232,645 243,655 256,668 264,681 290,684 320,685 314,670 328,660 342,652 354,657 368,650 378,638 378,628 385,618 396,628 412,644 424,642 432,624 438,622 445,634 458,628 470,637 520,637 540,641 556,632 580,626 605,632',
				'605,632 610,634 624,646 628,660 629,682 645,693 670,699 690,720 702,725 760,729 770,732',
				'605,632 612,630 606,610 609,590 607,572 614,540 628,527 627,515 633,502 632,472',
				'485,437 500,443 510,452 512,480 530,482 542,486 538,497 560,495 572,484 592,486 596,470 604,458 618,454 630,465 632,472 655,472 662,476 668,490 674,492 685,478 702,466 718,470 726,482 736,484 738,496 740,486 756,480 764,472 750,462 752,452 762,446',
				'485,437 498,432 499,421 520,418 530,412 555,408 568,405 550,390 535,372 533,362 536,354 530,340 540,334 552,332 558,328 562,320 576,320 568,308 548,301 505,299 498,290 498,277 483,261',
				'558,328 568,337 580,335 586,348 595,356 606,365 604,372 600,382 628,383 632,394 630,400 622,404 622,414 605,414 590,408 568,405',
				'632,400 660,400 668,404 684,400 690,400',
				'339,214 355,220 385,225 400,233 405,246 418,255 424,267 445,263 465,268 483,261',
				'483,261 495,244 510,236 545,238 568,233 572,221 583,215 592,205 600,216 628,224 628,241 640,246 650,260 662,270 670,280 690,282 705,280 712,274 725,276 728,288 735,297 746,292 752,282 788,277 790,258',
				'735,297 722,293 706,303 716,320 724,333 697,334 700,340 708,362 690,366 692,398 684,405 686,413 705,418 708,428 722,432 732,437 740,428 752,423 776,418',
				'724,333 732,345 740,352 738,380 741,400 740,420 708,420 720,428 730,422 736,432',
				'740,352 752,350 764,360 776,365 766,376 767,388 778,390 776,418 790,432 762,446',
				'704,346 720,347 720,362 708,362'
			]
		},
		{
			x: 880,
			y: 470,
			lines: [
				'110,732 122,726 118,708 104,702 90,702 97,690 92,684 82,670 98,673 102,684 108,686 112,671 130,668 138,653 160,656 168,640 174,636 172,620 196,617 204,603 218,600 234,601 240,612 260,616 290,617 310,627 320,621 306,606 320,600',
				'0,40 18,40 34,50 52,56 56,66 52,76 66,77 110,80 122,92 116,110 130,120 148,128 154,134',
				'130,258 150,248 146,220 138,205 146,190 144,178 134,165 140,146 154,134 182,127 184,120 206,121 230,130 236,138 258,132 278,130 284,150 290,151 330,115',
				'330,115 340,122 362,124 368,110 390,114 398,97 408,94 424,104 430,120 445,145 462,160 474,156',
				'688,48 660,46 625,50 605,60 594,58 565,73 536,74 528,90 522,100 510,110 500,124 488,130 490,138 505,140 500,150 480,152 474,156',
				'688,48 706,50 718,62 722,78 740,112 742,118 768,110 776,135 780,152 810,156 802,165 812,172 806,180 820,185 812,192 804,195 784,198 784,222 758,222 745,234 724,243 700,238 684,250 672,272 662,262 656,270 640,270 624,275 598,268 580,270 560,283 540,300 515,296 494,286',
				'474,156 480,172 488,188 504,212 502,235 506,250 512,265 498,275 494,286 486,290 470,286 455,290 425,290 420,284 396,288 386,300 362,300 356,312 340,304 322,310 308,306 292,314 270,310 250,306 236,301 226,308',
				'130,258 150,266 174,270 190,278 196,290 210,296 226,308 240,314 262,324 260,350 254,362 244,375 250,390 242,405 248,425 234,436 228,450 212,447 182,448',
				'102,446 120,455 138,461 160,453 182,448 186,462 200,472 220,478 222,488 190,492 180,505 178,520 182,533 225,536 236,527 252,522 262,536 266,550 280,560 304,564 304,586 318,592 320,600',
				'320,600 342,604 354,612 366,621 374,607 400,603 396,594 414,575 440,563 456,558 448,544 438,534 442,528 460,518 456,502 450,498 470,487 486,482 476,468 470,440 458,434 450,445 430,437 414,428 385,410 376,412 366,400 364,365 346,350 354,330 356,312',
				'403,14 412,24 408,30 418,32 434,40 M',
				'408,26 402,36 398,46 388,50 384,54 394,54',
				'412,32 406,48 396,60 388,66 404,66 434,54'
			]
		}
	];

	// break long straight runs so the boundaries keep a surveyed look
	function roughen(line: string) {
		const pts = line
			.split(' ')
			.filter((p) => p.includes(','))
			.map((p) => p.split(',').map(Number));
		const out = [pts[0]];
		for (let i = 1; i < pts.length; i++) {
			const [ax, ay] = pts[i - 1];
			const [bx, by] = pts[i];
			const len = Math.hypot(bx - ax, by - ay);
			const n = Math.floor(len / 6);
			for (let k = 1; k < n; k++) {
				const off = Math.sin(ax * 3 + ay * 5 + k * 2.3) * 2.4;
				out.push([
					ax + ((bx - ax) * k) / n - ((by - ay) / len) * off,
					ay + ((by - ay) * k) / n + ((bx - ax) / len) * off
				]);
			}
			out.push(pts[i]);
		}
		return out.map(([x, y]) => `${x.toFixed(1)},${y.toFixed(1)}`).join(' ');
	}
</script>

{#snippet glyph(name: string)}
	<svg class="icon" viewBox="0 0 16 16" aria-hidden="true">
		{#if name === 'db2'}
			<rect width="16" height="16" rx="1" fill="#6b98c8" />
			<text x="8" y="10" font-size="6" text-anchor="middle" fill="#e8f1fb">DB2</text>
		{:else}
			{@html icons[name]}
		{/if}
	</svg>
{/snippet}

{#snippet tool(b: Tool)}
	<button type="button" class="tool" class:menu={b.menu} class:pressed={b.pressed} disabled={b.off} aria-label={b.label}>
		{@render glyph(b.icon)}
		{#if b.menu}<span class="arrow"></span>{/if}
	</button>
{/snippet}

{#snippet dockTitle(name: string)}
	<header class="dock-title">
		<h2>{name}</h2>
		<button type="button" class="dock-btn" aria-label="Float {name}">
			<svg viewBox="0 0 11 11"><rect x=".5" y=".5" width="10" height="10" rx="2" /><rect x="4.500" y="2.500" width="4" height="4" rx="1" /><rect x="2.500" y="4.500" width="4" height="4" rx="1" /></svg>
		</button>
		<button type="button" class="dock-btn" aria-label="Close {name}">
			<svg viewBox="0 0 11 11"><rect x=".5" y=".5" width="10" height="10" rx="2" /><path d="M3 3l5 5M8 3L3 8" stroke-width="2" /></svg>
		</button>
	</header>
{/snippet}

<div class="window">
	<nav class="menubar">
		{#each menus as [before, key, after]}
			<button type="button">{before}<u>{key}</u>{after}</button>
		{/each}
	</nav>

	{#each toolRows as row}
		<div class="toolrow">
			{#each row as bar}
				<div class="toolbar" role="toolbar">
					<span class="handle"></span>
					{#each bar as item}
						{#if item === 'sep'}
							<span class="sep"></span>
						{:else}
							{@render tool(item)}
						{/if}
					{/each}
				</div>
			{/each}
		</div>
	{/each}

	<div class="workspace">
		<div class="sidebar" role="toolbar">
			<span class="handle flat"></span>
			{#each sideTools as b}
				{@render tool(b)}
			{/each}
		</div>

		<div class="docks">
			<section class="dock browser">
				{@render dockTitle('Browser')}
				<div class="dock-tools">
					{#each browserTools as b}{@render tool(b)}{/each}
				</div>
				<ul class="tree">
					{#each sources as s}
						<li>
							<span class="expander" class:has={s.open}></span>
							{@render glyph(s.icon)}
							<span class="name">{s.name}</span>
						</li>
					{/each}
				</ul>
			</section>

			<div class="split-h"></div>

			<section class="dock layers">
				{@render dockTitle('Layers')}
				<div class="dock-tools">
					{#each layerTools as b}{@render tool(b)}{/each}
				</div>
				<ul class="tree">
					{#each layers as layer, i}
						<li class="layer" class:selected={i === selected}>
							<input type="checkbox" id="layer-{i}" bind:checked={layer.on} />
							<svg class="symbol" viewBox="0 0 16 16" aria-hidden="true">
								{#if layer.kind === 'line'}
									<path d="M0 7.500h16" stroke={layer.color} stroke-width={i ? 2 : 1} />
								{:else}
									<circle cx="8" cy="7.500" r="3" fill={layer.color} stroke="#555" />
								{/if}
							</svg>
							<label class="name" for="layer-{i}">{layer.name}</label>
							<button type="button" class="memory" aria-label="Temporary scratch layer">{@render glyph('chip')}</button>
						</li>
					{/each}
				</ul>
			</section>
		</div>

		<div class="split-v"></div>

		<main class="map">
			<svg viewBox="512 144 897 851" role="img" aria-label="Map canvas">
				{#each blocks as block}
					<g transform="translate({block.x} {block.y}) scale(0.33333)">
						{#each block.lines as line}
							<polyline points={roughen(line)} />
						{/each}
					</g>
				{/each}
			</svg>
		</main>
	</div>

	<footer class="status">
		<input class="locator" type="text" aria-label="Locate" />
		<span class="grow"></span>
		<input class="coords" type="text" aria-label="Coordinate" />
		<svg class="extent" viewBox="0 0 16 16" aria-hidden="true"><path d="M3 1q2-2 4 0z" fill="#222" /><path d="M11 .5h2" stroke="#aaa" /></svg>
		<span class="scale">
			<input type="text" aria-label="Scale" />
			<button type="button" aria-label="Choose scale"></button>
		</span>
	</footer>
</div>

<style>
	:global(body) {
		margin: 0;
		background: #f0f0f0;
	}

	.window {
		display: flex;
		flex-direction: column;
		height: 100vh;
		overflow: hidden;
		background: #f0f0f0;
		color: #000;
		font-family: 'Noto Sans', 'Open Sans', sans-serif;
		font-size: 13px;
		line-height: 18px;
	}

	button {
		padding: 0;
		border: 0;
		background: none;
		color: inherit;
		font: inherit;
	}

	.menubar {
		display: flex;
		flex: none;
		align-items: flex-start;
		height: 18px;
		padding-left: 4px;
		border-bottom: 1px solid #d0d0d0;
	}

	.menubar button {
		padding: 0 6px;
		line-height: 15px;
	}

	u {
		text-underline-offset: 2px;
	}

	.toolrow {
		display: flex;
		flex: none;
		height: 30px;
		border-bottom: 1px solid #b9b9b9;
		background: linear-gradient(#fafafa, #eee);
	}

	.toolrow:nth-of-type(4) {
		height: 29px;
	}

	.toolbar {
		display: flex;
		align-items: center;
		gap: 1px;
		padding-right: 4px;
	}

	.handle {
		width: 5px;
		height: 17px;
		margin: 0 3px 0 4px;
		background: radial-gradient(circle at 1px 1px, #d2d2d2 0.7px, transparent 1px) 0 0 / 3px 3px;
	}

	.handle.flat {
		flex: none;
		width: 17px;
		height: 5px;
		margin: 5px 0 3px 14px;
	}

	.sep {
		width: 2px;
		height: 12px;
		margin: 0 2px;
		background: linear-gradient(90deg, #d6d6d6 50%, #fff 50%);
	}

	.tool {
		display: flex;
		flex: none;
		align-items: center;
		box-sizing: border-box;
		width: 24px;
		height: 24px;
		padding: 0 4px;
	}

	.tool.menu {
		width: 36px;
		gap: 6px;
	}

	.tool.pressed {
		padding: 0 3px;
		border: 1px solid #979797;
		border-radius: 3px;
		background: #dcdcdc;
	}

	.tool:disabled .icon {
		opacity: 0.35;
		filter: grayscale(0.6);
	}

	.tool:disabled .arrow {
		opacity: 0.6;
	}

	.icon {
		display: block;
		flex: none;
		width: 16px;
		height: 16px;
	}

	.arrow {
		border: 4px solid transparent;
		border-top-color: #555;
		border-bottom: 0;
	}

	.workspace {
		display: flex;
		flex: 1;
		min-height: 0;
		padding-right: 4px;
	}

	.sidebar {
		display: flex;
		flex: none;
		flex-direction: column;
		width: 43px;
		border-right: 1px solid #b4b4b4;
		background: linear-gradient(90deg, #fafafa, #ececec);
	}

	.sidebar .tool {
		margin-left: 4px;
	}

	.docks {
		display: flex;
		flex: none;
		flex-direction: column;
		width: 461px;
	}

	.dock {
		display: flex;
		flex-direction: column;
		min-height: 0;
	}

	.browser {
		flex: 468 1 0;
	}

	.layers {
		flex: 381 1 0;
	}

	.dock-title {
		display: flex;
		flex: none;
		align-items: center;
		gap: 3px;
		height: 21px;
		padding: 0 2px 0 4px;
	}

	h2 {
		flex: 1;
		margin: 0;
		padding-bottom: 2px;
		font-size: 13px;
		font-weight: 400;
	}

	.dock-btn svg {
		display: block;
		width: 11px;
		height: 11px;
		fill: none;
		stroke: #555;
	}

	.dock-tools {
		display: flex;
		flex: none;
		align-items: center;
		gap: 1px;
		height: 28px;
		margin-bottom: 2px;
		padding-left: 4px;
	}

	.tree {
		flex: 1;
		min-height: 0;
		margin: 0;
		padding: 0;
		overflow: hidden;
		border: 1px solid #b4b4b4;
		background: #fff;
		list-style: none;
	}

	.tree li {
		display: flex;
		align-items: center;
		height: 19px;
		padding-left: 8px;
	}

	.tree li > :global(.icon) {
		margin-right: 6px;
	}

	.name {
		padding-bottom: 2px;
	}

	.expander {
		width: 15px;
	}

	.expander.has::before {
		content: '';
		display: block;
		width: 0;
		border: 4px solid transparent;
		border-left-color: #555;
		border-right: 0;
	}

	.tree li.layer {
		padding: 0 10px 0 23px;
		color: #777;
		font-style: italic;
		font-weight: 700;
	}

	.tree li.selected {
		background: linear-gradient(90deg, #0078d7 62px, #1883dc 62px);
		color: #fff;
		font-style: normal;
		font-weight: 600;
	}

	.selected label {
		text-decoration: underline;
		text-decoration-skip-ink: none;
		text-underline-offset: 2px;
	}

	.layer input {
		appearance: none;
		box-sizing: border-box;
		width: 14px;
		height: 14px;
		margin: 0 6px 0 0;
		border: 1px solid #b5b5b5;
		background: #fff;
	}

	.layer input:checked::before {
		content: '';
		display: block;
		width: 3px;
		height: 7px;
		margin: 0 0 0 4px;
		border: solid #000;
		border-width: 0 2px 2px 0;
		transform: rotate(40deg);
	}

	.symbol {
		width: 16px;
		height: 16px;
		margin-right: 6px;
	}

	.layer label {
		flex: 1;
	}

	.memory {
		padding: 0;
		border: 1px solid #ddd;
		background: #f7f7f7;
		color: #777;
	}

	.memory :global(.icon) {
		height: 15px;
	}

	.selected .memory {
		color: #7b93ab;
	}

	.split-h,
	.split-v {
		display: flex;
		flex: none;
		align-items: center;
		justify-content: center;
	}

	.split-h {
		height: 5px;
	}

	.split-v {
		width: 6px;
	}

	.split-h::before,
	.split-v::before {
		content: '';
		width: 17px;
		height: 2px;
		background: radial-gradient(circle at 1px 1px, #d2d2d2 0.7px, transparent 1px) 0 0 / 3px 3px;
	}

	.split-v::before {
		width: 2px;
		height: 17px;
	}

	.map {
		flex: 1;
		min-width: 0;
		margin-top: 1px;
		border: 1px solid #b4b4b4;
		background: #fff;
	}

	.map svg {
		display: block;
		width: 100%;
		height: 100%;
	}

	.map polyline {
		fill: none;
		stroke: #eb7850;
		stroke-width: 3;
		stroke-linejoin: round;
	}

	.status {
		display: flex;
		flex: none;
		align-items: flex-start;
		height: 4px;
		padding: 3px 32px 0 4px;
		overflow: hidden;
	}

	.status input {
		box-sizing: border-box;
		height: 22px;
		padding: 0 4px;
		border: 1px solid #a8a8a8;
		border-radius: 3px;
		background: #fff;
		font: inherit;
	}

	.locator {
		width: 244px;
	}

	.grow {
		flex: 1;
	}

	.coords {
		width: 99px;
	}

	.extent {
		width: 16px;
		height: 16px;
		margin: 3px 46px 0 4px;
	}

	.scale {
		display: flex;
		width: 83px;
	}

	.scale input {
		flex: 1;
		min-width: 0;
		border-radius: 3px 0 0 3px;
	}

	.scale button {
		box-sizing: border-box;
		width: 20px;
		height: 22px;
		border: 1px solid #a8a8a8;
		border-left: 0;
		border-radius: 0 3px 3px 0;
		background: #f8f8f8;
	}
</style>
